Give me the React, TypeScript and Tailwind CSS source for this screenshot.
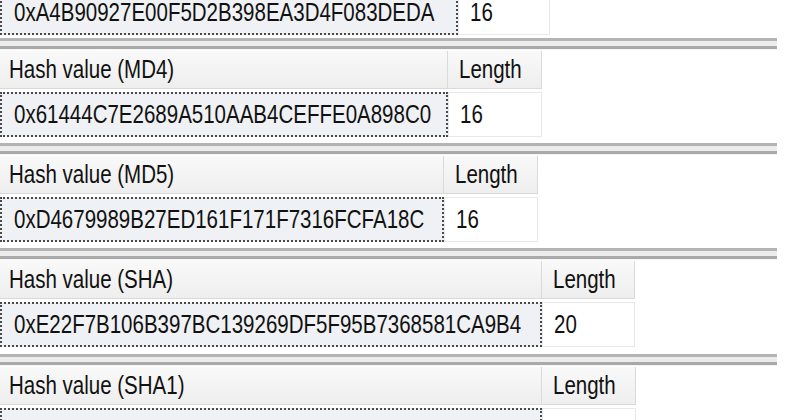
const font = { fontFamily: "'Liberation Sans', Arial, sans-serif" };

type Block = {
  label?: string;
  value: string;
  length: string;
  valueW: string;
  lenW: string;
  h?: string;
};

const blocks: Block[] = [
  { label: 'Hash value (MD4)', value: '0x61444C7E2689A510AAB4CEFFE0A898C0', length: '16', valueW: 'w-[448px]', lenW: 'w-[94px]', h: 'h-[105px]' },
  { label: 'Hash value (MD5)', value: '0xD4679989B27ED161F171F7316FCFA18C', length: '16', valueW: 'w-[444px]', lenW: 'w-[94px]', h: 'h-[105px]' },
  { label: 'Hash value (SHA)', value: '0xE22F7B106B397BC139269DF5F95B7368581CA9B4', length: '20', valueW: 'w-[542px]', lenW: 'w-[93px]', h: 'h-[106px]' },
  { label: 'Hash value (SHA1)', value: '0xE22F7B106B397BC139269DF5F95B7368581CA9B4', length: '20', valueW: 'w-[542px]', lenW: 'w-[94px]', h: 'h-[105px]' },
];

// grid text is a condensed face; squeeze Liberation Sans to Arial Narrow width
function Narrow({ children }: { children: React.ReactNode }) {
  return <span className="inline-block origin-left scale-x-[0.82] whitespace-nowrap">{children}</span>;
}

function Splitter() {
  return (
    <div className="flex h-[12px] w-[777px] flex-col">
      <div className="h-[3px] bg-[#b4b4b4]" />
      <div className="h-[5px] bg-[#ececec]" />
      <div className="h-[3px] bg-[#a9a9a9]" />
      <div className="h-[1px] bg-[#f4f4f4]" />
    </div>
  );
}

function ValueRow({ value, length, valueW, lenW }: Block) {
  return (
    <div className="flex h-[45px]">
      <div className={`${valueW} flex items-center overflow-hidden border-2 border-dotted border-[#4a4a4a] bg-[#eff1f4] pl-[12px] text-[25px] text-[#111]`}>
        <Narrow>{value}</Narrow>
      </div>
      <div className={`${lenW} flex items-center overflow-hidden border border-[#e8e8e8] bg-white pl-[11px] text-[25px] text-[#111]`}>
        <Narrow>{length}</Narrow>
      </div>
    </div>
  );
}

function HeaderRow({ label, valueW, lenW }: Block) {
  return (
    <div className="flex h-[38px]">
      <div className={`${valueW} flex items-center overflow-hidden border-b border-r border-[#dadada] bg-linear-to-b from-[#f9f9f9] to-[#eeeeee] pl-[9px] text-[25px] text-[#111]`}>
        <Narrow>{label}</Narrow>
      </div>
      <div className={`${lenW} flex items-center overflow-hidden border-b border-r border-[#dadada] bg-linear-to-b from-[#f9f9f9] to-[#eeeeee] pl-[11px] text-[25px] text-[#111]`}>
        <Narrow>Length</Narrow>
      </div>
    </div>
  );
}

export default function App() {
  return (
    <div className="h-[420px] w-[800px] overflow-hidden bg-white leading-none" style={font}>
      <div className="-mt-[10px]">
        <ValueRow value="0xA4B90927E00F5D2B398EA3D4F083DEDA" length="16" valueW="w-[458px]" lenW="w-[92px]" />
      </div>
      <div className="mt-[3px] flex flex-col">
        {blocks.map((b) => (
          <div key={b.label} className={`flex ${b.h} flex-col`}>
            <Splitter />
            <div className="mt-[1px]">
              <HeaderRow {...b} />
            </div>
            <div className="mt-[3px]">
              <ValueRow {...b} />
            </div>
          </div>
        ))}
      </div>
    </div>
  );
}
